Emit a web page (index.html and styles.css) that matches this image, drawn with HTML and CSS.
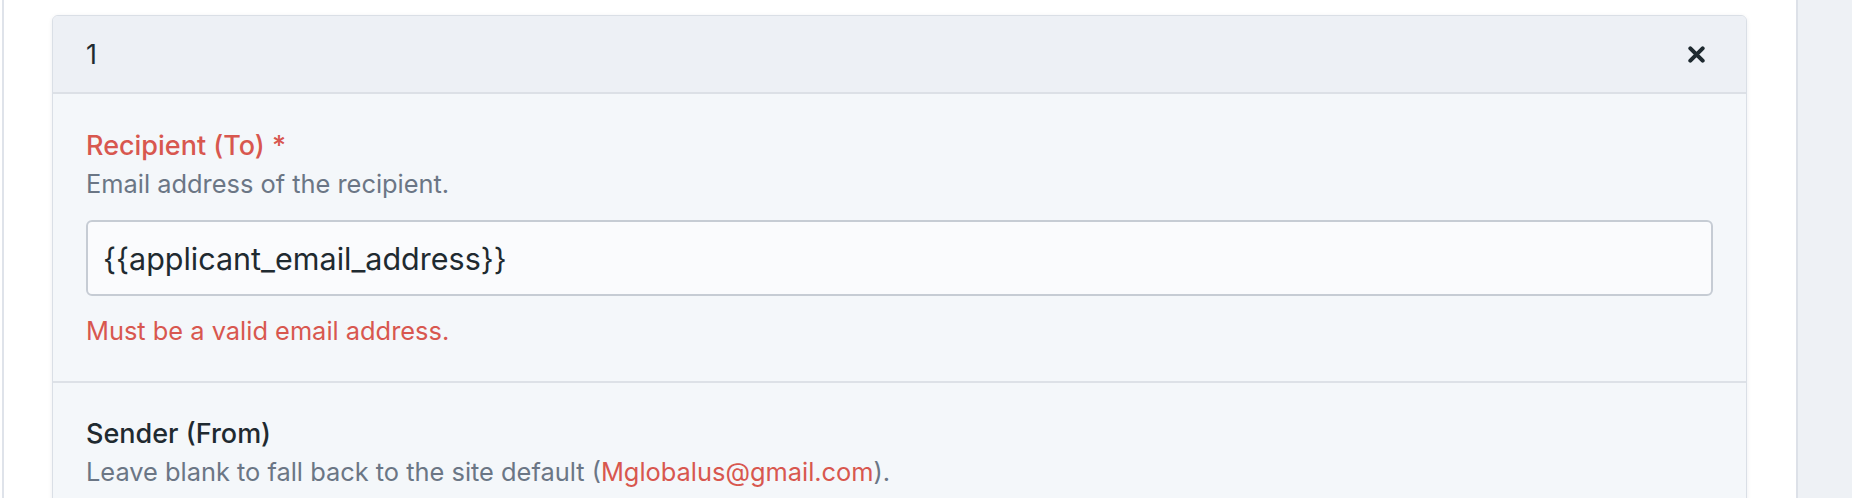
FILE: index.html
```html
<!DOCTYPE html>
<html lang="en">
<head>
<meta charset="utf-8">
<title>Email action</title>
<link rel="stylesheet" href="styles.css">
</head>
<body>
<div class="page">
  <main class="main">
    <section class="card">
      <header class="card-header">
        <span class="card-title">1</span>
        <button class="close" type="button" aria-label="Remove">
          <svg viewBox="0 0 16 16" width="17" height="17" aria-hidden="true">
            <path d="M2.2 2.2 L13.8 13.8 M13.8 2.2 L2.2 13.8" stroke="#1f2a30" stroke-width="3.8" stroke-linecap="round"/>
          </svg>
        </button>
      </header>
      <div class="field">
        <label class="label label-error">Recipient (To) *</label>
        <p class="help">Email address of the recipient.</p>
        <div class="input">{{applicant_email_address}}</div>
        <p class="error">Must be a valid email address.</p>
      </div>
      <div class="field field-divided">
        <label class="label">Sender (From)</label>
        <p class="help">Leave blank to fall back to the site default (<span class="link">Mglobalus@gmail.com</span>).</p>
      </div>
    </section>
  </main>
  <aside class="sidebar"></aside>
</div>
</body>
</html>
```
FILE: styles.css
```css
* { box-sizing: border-box; }
html, body { margin: 0; padding: 0; height: 100%; overflow: hidden; }
body {
  background: #ffffff;
  font-family: "Inter", "Noto Sans", sans-serif;
  color: #1f2a30;
}
.page {
  display: flex;
  height: 100%;
  padding-left: 2px;
}
.main {
  flex: 1;
  border-left: 2px solid #dfe3ea;
  padding: 15px 49px 0 48px;
  min-width: 0;
}
.sidebar {
  width: 56px;
  flex: none;
  background: #eef1f5;
  border-left: 2px solid #dde1e8;
}
.card {
  border: 1.5px solid #dadfe6;
  border-radius: 6px;
  background: #f4f7fa;
  box-shadow: 0 1px 4px rgba(30, 40, 60, 0.08);
  overflow: hidden;
}
.card-header {
  display: flex;
  align-items: center;
  justify-content: space-between;
  height: 78px;
  padding: 0 41px 0 33px;
  background: #edf0f5;
  border-bottom: 2px solid #dce0e6;
}
.card-title {
  font-size: 27px;
  font-weight: 400;
  color: #1f2a30;
}
.close {
  border: 0;
  background: none;
  padding: 0;
  width: 17px;
  height: 17px;
  display: flex;
  cursor: pointer;
}
.field {
  padding: 34px 33px 34px 33px;
}
.field-divided {
  border-top: 2px solid #dde1e7;
  padding-top: 33px;
}
.label {
  display: block;
  font-size: 27px;
  line-height: 36px;
  font-weight: 500;
  color: #1f2a30;
}
.label-error { color: #d8574f; }
.help {
  margin: 3px 0 0;
  font-size: 25.4px;
  line-height: 33px;
  color: #6b7685;
}
.link { color: #d8574f; }
.input {
  margin-top: 20px;
  height: 76px;
  border: 2px solid #c6ccd4;
  border-radius: 6px;
  background: #fafbfd;
  padding: 0 15px;
  display: flex;
  align-items: center;
  font-size: 30.5px;
  color: #1f2a30;
}
.error {
  margin: 18px 0 0;
  font-size: 25.4px;
  line-height: 33px;
  color: #d8574f;
}
```
